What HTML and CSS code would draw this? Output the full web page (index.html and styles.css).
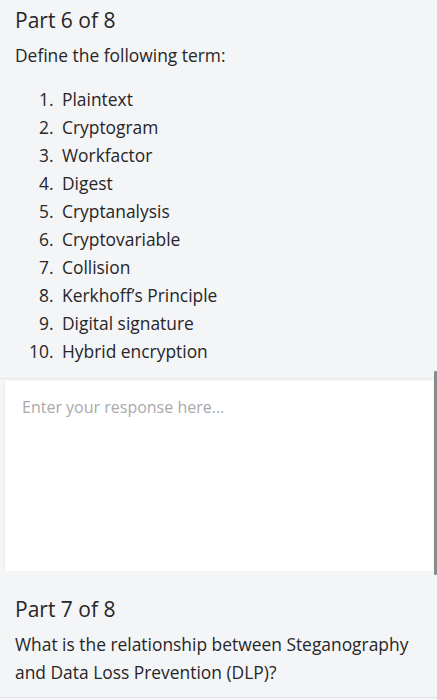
FILE: index.html
```html
<!DOCTYPE html>
<html>
<head>
<meta charset="utf-8">
<link rel="stylesheet" href="styles.css">
</head>
<body>
<div class="page">
  <section class="part part-first">
    <h2 class="part-title">Part 6 of 8</h2>
    <p class="question">Define the following term:</p>
    <ol class="terms">
      <li>Plaintext</li>
      <li>Cryptogram</li>
      <li>Workfactor</li>
      <li>Digest</li>
      <li>Cryptanalysis</li>
      <li>Cryptovariable</li>
      <li>Collision</li>
      <li>Kerkhoff’s Principle</li>
      <li>Digital signature</li>
      <li>Hybrid encryption</li>
    </ol>
  </section>
  <div class="response">
    <textarea class="response-input" placeholder="Enter your response here..."></textarea>
    <div class="scroll-thumb"></div>
  </div>
  <section class="part part-second">
    <h2 class="part-title">Part 7 of 8</h2>
    <p class="question">What is the relationship between Steganography and Data Loss Prevention (DLP)?</p>
  </section>
</div>
</body>
</html>
```
FILE: styles.css
```css
html, body {
  margin: 0;
  padding: 0;
  background: #f4f5f7;
}
body {
  font-family: "Open Sans", "Noto Sans", sans-serif;
  color: #262628;
}
.page {
  display: flex;
  flex-direction: column;
}
.part {
  padding: 0 15px;
}
.part-first {
  padding-top: 5px;
  padding-bottom: 13px;
  border-bottom: 1px solid #ebe4e9;
}
.part-title {
  margin: 0;
  font-size: 21px;
  line-height: 30px;
  font-weight: 400;
}
.question {
  margin: 6px 0 0;
  font-size: 17.4px;
  line-height: 28px;
}
.terms {
  margin: 16px 0 0;
  padding-left: 43px;
  font-size: 17.4px;
  line-height: 28px;
}
.terms li {
  padding-left: 4px;
}
.response {
  position: relative;
  margin: 2px 0 0 4px;
  height: 190px;
}
.response-input {
  display: block;
  box-sizing: border-box;
  width: 429px;
  height: 190px;
  margin: 0;
  padding: 12px 17px;
  border: none;
  border-left: 1px solid #ececee;
  background: #ffffff;
  font-family: "Open Sans", "Noto Sans", sans-serif;
  font-size: 16px;
  line-height: 28px;
  color: #262628;
  resize: none;
  outline: none;
}
.response-input::placeholder {
  color: #a9a9ab;
}
.scroll-thumb {
  position: absolute;
  right: 0;
  top: -10px;
  width: 3px;
  height: 204px;
  background: #8a8a8c;
  border-radius: 1px;
}
.part-second {
  padding-top: 23px;
  padding-bottom: 11px;
  border-bottom: 1px solid #e2e2e4;
}
```
